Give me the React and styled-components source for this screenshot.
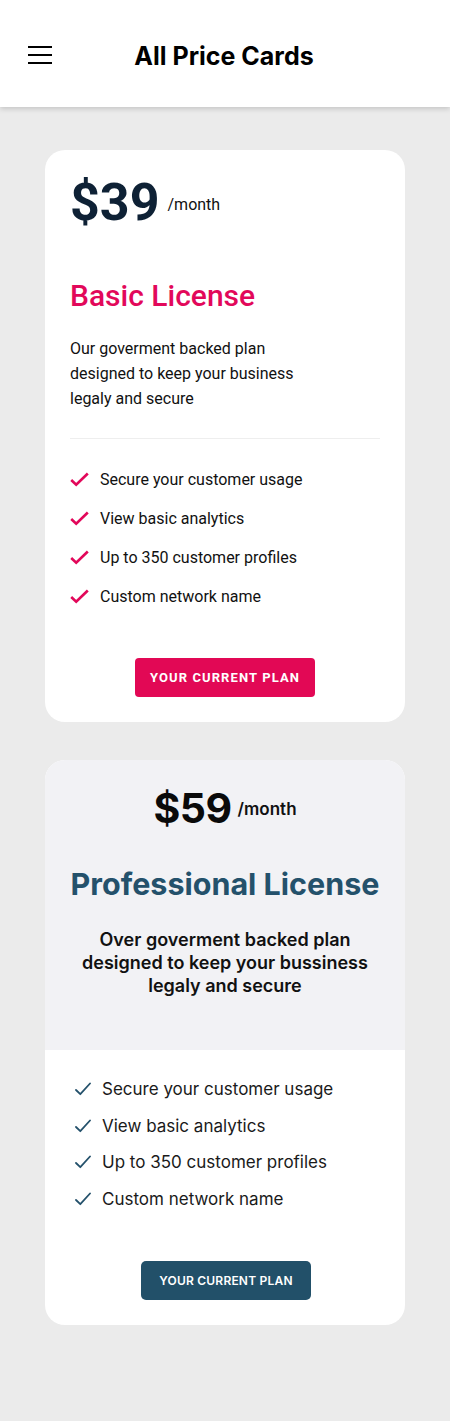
import React from "react";
import styled, { createGlobalStyle } from "styled-components";

const GlobalStyle = createGlobalStyle`
  html, body { margin: 0; padding: 0; }
  body {
    background: #ebebeb;
    min-height: 100vh;
    font-family: Roboto, "Noto Sans", sans-serif;
    -webkit-font-smoothing: antialiased;
  }
  * { box-sizing: border-box; }
`;

const Page = styled.div`
  min-height: 1421px;
  background: #ebebeb;
`;

const Header = styled.header`
  height: 107px;
  background: #ffffff;
  box-shadow: 0 2px 5px rgba(0, 0, 0, 0.16);
  display: grid;
  grid-template-columns: 1fr auto 1fr;
  align-items: center;
  padding: 0 28px;
  position: relative;
  z-index: 1;
`;

const MenuButton = styled.button`
  justify-self: start;
  width: 24px;
  height: 18px;
  padding: 0;
  border: 0;
  background: transparent;
  display: flex;
  flex-direction: column;
  justify-content: space-between;
  margin-top: 2px;
  span {
    display: block;
    height: 2px;
    width: 24px;
    background: #000;
  }
`;

const Title = styled.h1`
  margin: 4px 0 0 -2px;
  font-family: Inter, "Noto Sans", sans-serif;
  font-weight: 700;
  font-size: 25px;
  color: #000;
  letter-spacing: 0;
`;

const Main = styled.main`
  display: flex;
  flex-direction: column;
  align-items: center;
  gap: 38px;
  padding: 43px 0 60px;
`;

const Card = styled.section`
  width: 360px;
  background: #ffffff;
  border-radius: 20px;
  overflow: hidden;
  display: flex;
  flex-direction: column;
`;

/* ---------- Basic card ---------- */
const BasicBody = styled.div`
  padding: 25px 25px 25px;
  display: flex;
  flex-direction: column;
`;

const PriceRow = styled.div`
  display: flex;
  align-items: center;
  justify-content: ${(p) => (p.$center ? "center" : "flex-start")};
  gap: ${(p) => p.$gap || 8}px;
  height: ${(p) => p.$h}px;
`;

const BasicAmount = styled.span`
  font-family: Roboto, sans-serif;
  font-weight: 700;
  font-size: 52px;
  line-height: 56px;
  color: #0e2135;
`;

const BasicPer = styled.span`
  font-family: Roboto, sans-serif;
  font-size: 16px;
  color: #111;
  margin-top: 2px;
`;

const BasicName = styled.h2`
  margin: 48px 0 0;
  font-family: Roboto, sans-serif;
  font-weight: 500;
  font-size: 30px;
  line-height: 34px;
  color: #e2085a;
`;

const BasicDesc = styled.p`
  margin: 23px 0 0;
  max-width: 240px;
  font-family: Roboto, sans-serif;
  font-size: 16px;
  line-height: 25px;
  color: #111;
`;

const Divider = styled.hr`
  margin: 27px 0 0;
  border: 0;
  height: 1px;
  background: #eeeeee;
`;

const FeatureList = styled.ul`
  list-style: none;
  margin: ${(p) => p.$mt}px 0 0;
  padding: 0;
  display: flex;
  flex-direction: column;
  gap: ${(p) => p.$gap}px;
`;

const Feature = styled.li`
  display: flex;
  align-items: center;
  height: 24px;
  gap: ${(p) => p.$gap}px;
  font-family: ${(p) => p.$font};
  font-size: ${(p) => p.$size}px;
  color: ${(p) => p.$color};
`;

const IconBox = styled.span`
  display: flex;
  width: ${(p) => p.$w}px;
  justify-content: center;
  flex-shrink: 0;
`;

const Button = styled.button`
  align-self: center;
  margin-top: ${(p) => p.$mt}px;
  width: ${(p) => p.$w}px;
  height: 39px;
  border: 0;
  border-radius: ${(p) => p.$r}px;
  background: ${(p) => p.$bg};
  color: #fff;
  font-family: ${(p) => p.$font};
  font-weight: ${(p) => p.$weight};
  font-size: ${(p) => p.$size}px;
  letter-spacing: ${(p) => p.$ls}px;
  text-transform: uppercase;
  cursor: pointer;
`;

/* ---------- Professional card ---------- */
const ProTop = styled.div`
  background: #f2f2f5;
  padding: 24px 16px 53px;
  display: flex;
  flex-direction: column;
  align-items: center;
  text-align: center;
`;

const ProAmount = styled.span`
  font-family: Inter, sans-serif;
  font-weight: 700;
  font-size: 41px;
  line-height: 48px;
  color: #0a0a0a;
  letter-spacing: -0.5px;
`;

const ProPer = styled.span`
  font-family: Inter, sans-serif;
  font-weight: 600;
  font-size: 17px;
  color: #111;
  margin-top: 2px;
`;

const ProName = styled.h2`
  margin: 35px 0 0;
  font-family: Inter, sans-serif;
  font-weight: 700;
  font-size: 30.5px;
  line-height: 34px;
  color: #24516b;
  letter-spacing: 0;
`;

const ProDesc = styled.p`
  margin: 27px 0 0;
  max-width: 310px;
  font-family: Inter, sans-serif;
  font-weight: 600;
  font-size: 18px;
  line-height: 23px;
  color: #111;
`;

const ProBody = styled.div`
  padding: 27px 28px 25px 30px;
  display: flex;
  flex-direction: column;
`;

const PinkCheck = () => (
  <svg width="19" height="15" viewBox="0 0 19 15" fill="none">
    <polyline
      points="1.2,8 6.2,12.8 17.8,1.5"
      stroke="#e2085a"
      strokeWidth="2.6"
      strokeLinecap="butt"
      strokeLinejoin="miter"
    />
  </svg>
);

const NavyCheck = () => (
  <svg width="16" height="14" viewBox="0 0 16 14" fill="none">
    <polyline
      points="1,8 5.3,12.2 15,1.5"
      stroke="#24516b"
      strokeWidth="1.8"
      strokeLinecap="round"
      strokeLinejoin="round"
    />
  </svg>
);

const features = [
  "Secure your customer usage",
  "View basic analytics",
  "Up to 350 customer profiles",
  "Custom network name",
];

export default function App() {
  return (
    <Page>
      <GlobalStyle />
      <Header>
        <MenuButton aria-label="menu">
          <span />
          <span />
          <span />
        </MenuButton>
        <Title>All Price Cards</Title>
        <div />
      </Header>
      <Main>
        <Card>
          <BasicBody>
            <PriceRow $h={56} $gap={8}>
              <BasicAmount>$39</BasicAmount>
              <BasicPer>/month</BasicPer>
            </PriceRow>
            <BasicName>Basic License</BasicName>
            <BasicDesc>
              Our goverment backed plan designed to keep your business legaly
              and secure
            </BasicDesc>
            <Divider />
            <FeatureList $mt={28} $gap={15}>
              {features.map((f) => (
                <Feature
                  key={f}
                  $gap={11}
                  $font="Roboto, sans-serif"
                  $size={16}
                  $color="#111"
                >
                  <IconBox $w={19}>
                    <PinkCheck />
                  </IconBox>
                  {f}
                </Feature>
              ))}
            </FeatureList>
            <Button
              $mt={50}
              $w={180}
              $r={4}
              $bg="#e20855"
              $font="Roboto, sans-serif"
              $weight={700}
              $size={13}
              $ls={1.1}
            >
              Your current plan
            </Button>
          </BasicBody>
        </Card>

        <Card>
          <ProTop>
            <PriceRow $h={48} $gap={6} $center>
              <ProAmount>$59</ProAmount>
              <ProPer>/month</ProPer>
            </PriceRow>
            <ProName>Professional License</ProName>
            <ProDesc>
              Over goverment backed plan designed to keep your bussiness legaly
              and secure
            </ProDesc>
          </ProTop>
          <ProBody>
            <FeatureList $mt={0} $gap={12.5}>
              {features.map((f) => (
                <Feature
                  key={f}
                  $gap={11}
                  $font="Inter, sans-serif"
                  $size={17}
                  $color="#1a1a1a"
                >
                  <IconBox $w={16}>
                    <NavyCheck />
                  </IconBox>
                  {f}
                </Feature>
              ))}
            </FeatureList>
            <Button
              $mt={50}
              $w={170}
              $r={5}
              $bg="#225069"
              $font="Inter, sans-serif"
              $weight={600}
              $size={12}
              $ls={0.2}
            >
              Your current plan
            </Button>
          </ProBody>
        </Card>
      </Main>
    </Page>
  );
}
